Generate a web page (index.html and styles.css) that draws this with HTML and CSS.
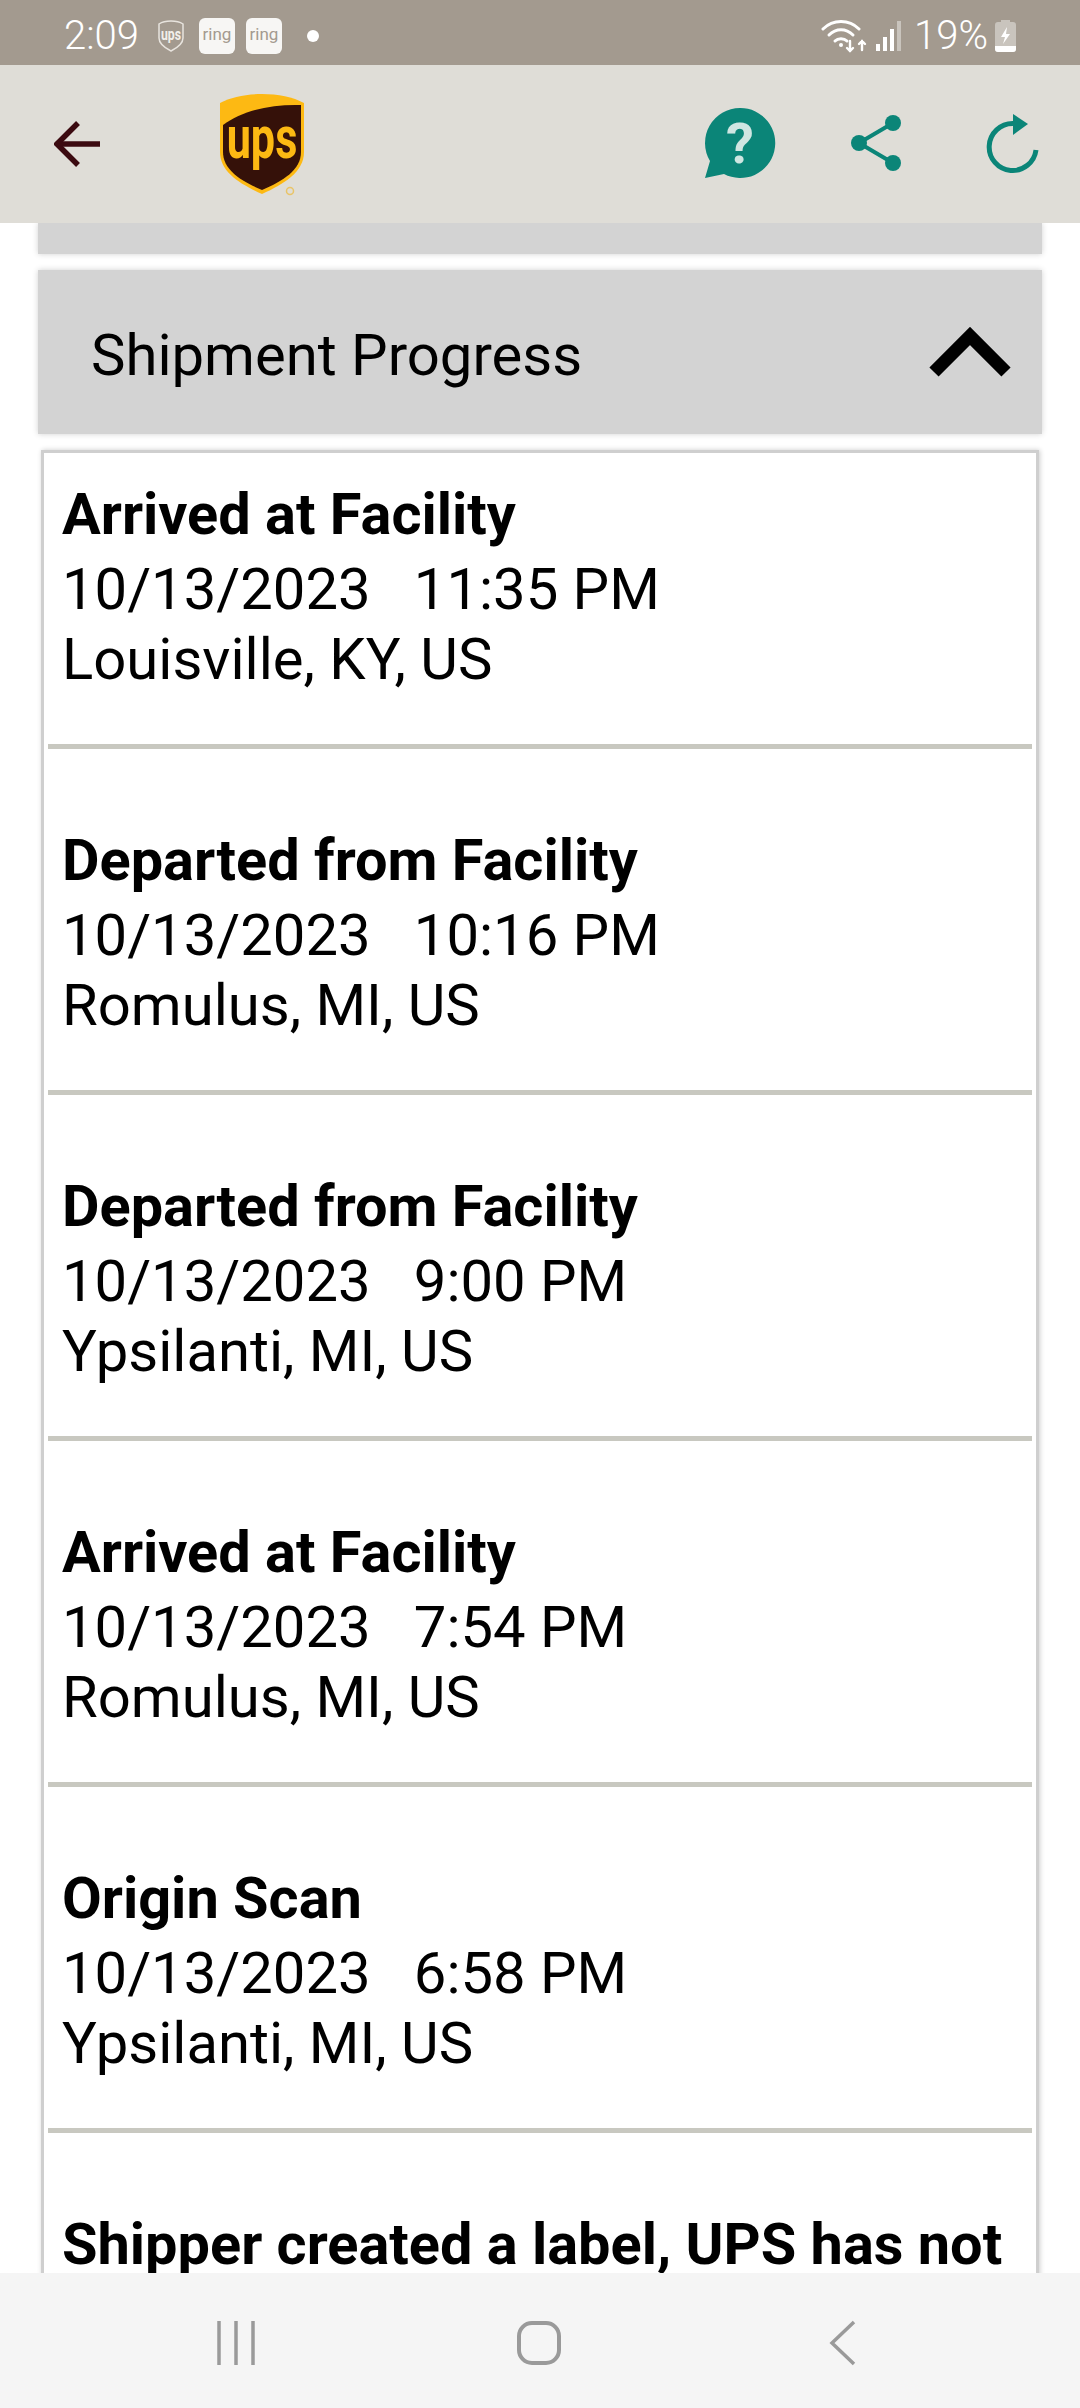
FILE: index.html
```html
<!DOCTYPE html>
<html>
	<head>
		<meta charset="utf-8" />
		<title>Shipment Progress</title>
		<link rel="stylesheet" href="styles.css">
	</head>
	<body>
		<div class="phone">
			<div class="status">
				<span class="clock">2:09</span>
				<svg class="mini-ups" viewBox="0 0 26 32">
					<path d="M13 1C8 1 4 2 1 4V18C1 24 7 28 13 31C19 28 25 24 25 18V4C22 2 18 1 13 1Z" fill="#a39a8f" stroke="#e8e4de" stroke-width="1.5"/>
					<text transform="translate(13 20) scale(.72 1)" text-anchor="middle" class="mini-ups-text">ups</text>
				</svg>
				<span class="ring">ring</span>
				<span class="ring ring-next">ring</span>
				<span class="dot"></span>
				<span class="status-right">
					<svg class="wifi" viewBox="0 0 46 34" fill="none" stroke="#fff" stroke-width="3" stroke-linecap="round">
						<path d="M2 10C12 0 28 0 38 10"/>
						<path d="M8 16C15 9 25 9 32 16"/>
						<path d="M14 22C17 19 23 19 26 22"/>
						<circle cx="20" cy="26" r="2" fill="#fff" stroke="none"/>
						<path d="M29 22V32M26 29L29 32L32 29" stroke-width="2.4"/>
						<path d="M41 31V22M38 25L41 22L44 25" stroke-width="2.4"/>
					</svg>
					<svg class="signal" viewBox="0 0 27 30">
						<rect x="0" y="23" width="4" height="7" fill="#fff"/>
						<rect x="7" y="16" width="4" height="14" fill="#fff"/>
						<rect x="14" y="8" width="4" height="22" fill="#fff"/>
						<rect x="21" y="0" width="4" height="30" fill="#c9c4bd"/>
					</svg>
					<span class="percent">19%</span>
					<svg class="battery" viewBox="0 0 21 32">
						<path d="M6 0H15V2H18Q21 2 21 5V29Q21 32 18 32H3Q0 32 0 29V5Q0 2 3 2H6Z" fill="#c9c4bd"/>
						<path d="M0 26H21V29Q21 32 18 32H3Q0 32 0 29Z" fill="#fff"/>
						<path d="M12 7L6 17H10L8 24L15 14H11Z" fill="#fff"/>
					</svg>
				</span>
			</div>

			<div class="topbar">
				<svg class="back" viewBox="0 0 46 46" fill="none" stroke="#3b0a10" stroke-width="5.5">
					<path d="M24 2L3 23L24 44"/>
					<path d="M3 23H46"/>
				</svg>
				<svg class="logo" viewBox="0 0 86 102">
					<path d="M43 0C27 0 12 3 1 9V58C1 78 21 90 43 100C65 90 85 78 85 58V9C74 3 59 0 43 0Z" fill="#fdb913"/>
					<path d="M82 11V58C82 76 64 87 43 96C22 87 4 76 4 58V31C24 16 54 10 82 11Z" fill="#351109"/>
					<text transform="translate(43 64) scale(.72 1)" text-anchor="middle" class="logo-text">ups</text>
					<circle cx="71" cy="97" r="3.5" fill="none" stroke="#e9c468" stroke-width="1.5"/>
				</svg>
				<svg class="help" viewBox="0 0 72 72">
					<path d="M35 0A35 35 0 1 1 19 66L0 70L5 53A35 35 0 0 1 35 0Z" fill="#0b8578"/>
					<text x="35" y="55" text-anchor="middle" class="help-text">?</text>
				</svg>
				<svg class="share" viewBox="0 0 54 58" fill="#0b8578" stroke="#0b8578">
					<path d="M9 29L43 9M9 29L43 49" stroke-width="4" fill="none"/>
					<circle cx="43" cy="9" r="8" stroke="none"/>
					<circle cx="9" cy="29" r="8" stroke="none"/>
					<circle cx="43" cy="49" r="8" stroke="none"/>
				</svg>
				<svg class="reload" viewBox="0 0 54 60">
					<path d="M50 36A23.500 23.500 0 1 1 27 9.500" fill="none" stroke="#0b8578" stroke-width="5"/>
					<path d="M27 0L42 10L27 21Z" fill="#0b8578"/>
				</svg>
			</div>

			<div class="content">
				<div class="panel panel-stub"></div>
				<div class="panel panel-head">
					<span>Shipment Progress</span>
					<svg class="chevron" viewBox="0 0 82 50" fill="none" stroke="#000" stroke-width="13">
						<path d="M5 45L41 9L77 45"/>
					</svg>
				</div>
				<div class="card">
					<div class="event">
						<div class="event-title">Arrived at Facility</div>
						<div class="event-line">10/13/2023&nbsp;&nbsp; 11:35 PM</div>
						<div class="event-line">Louisville, KY, US</div>
					</div>
					<div class="event">
						<div class="event-title">Departed from Facility</div>
						<div class="event-line">10/13/2023&nbsp;&nbsp; 10:16 PM</div>
						<div class="event-line">Romulus, MI, US</div>
					</div>
					<div class="event">
						<div class="event-title">Departed from Facility</div>
						<div class="event-line">10/13/2023&nbsp;&nbsp; 9:00 PM</div>
						<div class="event-line">Ypsilanti, MI, US</div>
					</div>
					<div class="event">
						<div class="event-title">Arrived at Facility</div>
						<div class="event-line">10/13/2023&nbsp;&nbsp; 7:54 PM</div>
						<div class="event-line">Romulus, MI, US</div>
					</div>
					<div class="event">
						<div class="event-title">Origin Scan</div>
						<div class="event-line">10/13/2023&nbsp;&nbsp; 6:58 PM</div>
						<div class="event-line">Ypsilanti, MI, US</div>
					</div>
					<div class="event">
						<div class="event-title">Shipper created a label, UPS has not</div>
					</div>
				</div>
			</div>

			<div class="navbar">
				<svg class="nav-recent" viewBox="0 0 40 44" stroke="#9a9a9a" stroke-width="3.500">
					<path d="M3 0V44M20 0V44M37 0V44"/>
				</svg>
				<svg class="nav-home" viewBox="0 0 44 44" fill="none" stroke="#9a9a9a" stroke-width="4">
					<rect x="2" y="2" width="40" height="40" rx="13"/>
				</svg>
				<svg class="nav-back" viewBox="0 0 28 46" fill="none" stroke="#9a9a9a" stroke-width="3.500">
					<path d="M25 2L3 23L25 44"/>
				</svg>
			</div>
		</div>
	</body>
</html>
```

FILE: styles.css
```css
* {
	padding: 0px;
	margin: 0px;
	box-sizing: border-box;
}

body {
	background-color: #fff;
	font-family: Roboto, "Liberation Sans", sans-serif;
	color: #000;
}

svg {
	flex: none;
}

.phone {
	width: 1080px;
	height: 2408px;
	display: flex;
	flex-direction: column;
	overflow: hidden;
}

/* status bar */
.status {
	height: 65px;
	flex: none;
	background-color: #a39a8f;
	color: #fff;
	display: flex;
	align-items: center;
	padding: 6px 64px 0;
}

.clock {
	font-size: 40px;
	font-weight: 300;
	width: 94px;
}

.mini-ups {
	width: 26px;
	height: 32px;
}

.mini-ups-text {
	font-family: Roboto, sans-serif;
	font-size: 17px;
	font-weight: 700;
	fill: #f2efea;
}

.ring {
	width: 36px;
	height: 36px;
	margin-left: 15px;
	border-radius: 6px;
	background-color: #f7f6f4;
	color: #a39a8f;
	font-size: 17px;
	line-height: 33px;
	text-align: center;
}

.ring-next {
	margin-left: 11px;
}

.dot {
	width: 12px;
	height: 12px;
	margin-left: 25px;
	border-radius: 50%;
	background-color: #fff;
}

.status-right {
	margin-left: auto;
	display: flex;
	align-items: center;
}

.wifi {
	width: 46px;
	height: 34px;
}

.signal {
	width: 27px;
	height: 30px;
	margin-left: 9px;
}

.percent {
	font-size: 40px;
	font-weight: 300;
	margin-left: 11px;
	width: 81px;
}

.battery {
	width: 21px;
	height: 32px;
}

/* app header */
.topbar {
	height: 158px;
	flex: none;
	background-color: #dfddd7;
	display: flex;
	align-items: center;
}

.back {
	width: 46px;
	height: 46px;
	margin-left: 54px;
}

.logo {
	width: 86px;
	height: 102px;
	margin-left: 119px;
	margin-top: 2px;
}

.logo-text {
	font-family: Roboto, sans-serif;
	font-size: 60px;
	font-weight: 700;
	fill: #fdb913;
}

.help {
	width: 72px;
	height: 72px;
	margin-left: 400px;
}

.help-text {
	font-family: Roboto, sans-serif;
	font-size: 56px;
	font-weight: 700;
	fill: #cfe6e2;
}

.share {
	width: 54px;
	height: 58px;
	margin-left: 73px;
	margin-top: -2px;
}

.reload {
	width: 54px;
	height: 60px;
	margin-left: 82px;
}

/* scrolling part */
.content {
	flex: 1;
	min-height: 0;
	overflow: hidden;
	padding: 0 38px;
}

.panel {
	background-color: #d3d3d3;
	box-shadow: 0 0 6px rgba(0, 0, 0, .18);
}

.panel-stub {
	height: 31px;
}

.panel-head {
	height: 164px;
	margin-top: 16px;
	padding: 5px 31px 0 53px;
	display: flex;
	align-items: center;
	justify-content: space-between;
	font-size: 58px;
}

.chevron {
	width: 82px;
	height: 50px;
	margin-top: -5px;
}

.card {
	margin: 16px 3px 0;
	border: 3px solid #cfcfcf;
	border-bottom: 0;
	box-shadow: 1px 0 5px rgba(0, 0, 0, .2);
	padding: 0 4px;
	height: 1900px;
}

.event {
	padding: 22px 15px 0 14px;
	height: 296px;
	border-bottom: 5px solid #c8c8c0;
	margin-bottom: 50px;
}

.event:last-child {
	border-bottom: 0;
}

.event-title {
	font-size: 57.700px;
	font-weight: 700;
	line-height: 79px;
}

.event-line {
	font-size: 58px;
	line-height: 70px;
}

/* android nav */
.navbar {
	height: 135px;
	flex: none;
	background-color: #f5f5f5;
	display: flex;
	align-items: center;
	padding-top: 5px;
}

.nav-recent {
	width: 40px;
	height: 44px;
	margin-left: 216px;
}

.nav-home {
	width: 44px;
	height: 44px;
	margin-left: 261px;
}

.nav-back {
	width: 28px;
	height: 46px;
	margin-left: 268px;
}
```
